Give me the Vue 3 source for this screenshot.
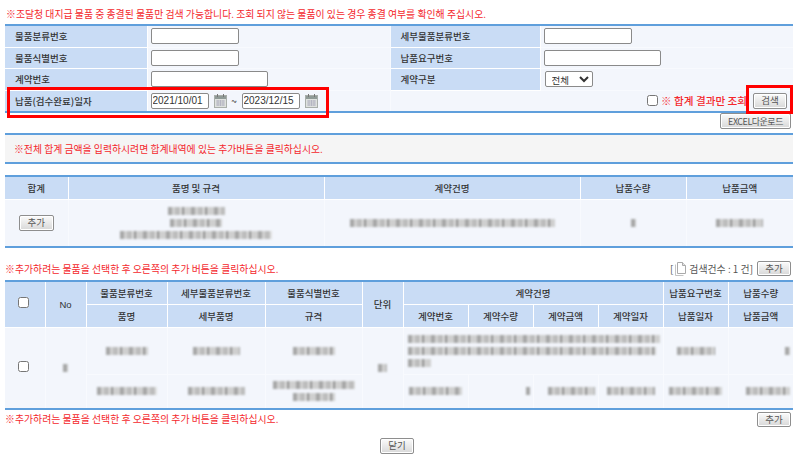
<script setup>
const listCols = [40, 41, 81, 98, 97, 41, 65, 65, 65, 65, 65, 65]
const totalCols = [63, 256, 256, 106, 107]
const calendars = ['2021/10/01', '2023/12/15']

const totalCells = [
  { lines: [57, 52, 152] },
  { lines: [205] },
  { lines: [5] },
  { lines: [47] },
]
const listRow1 = [
  { lines: [5], rs: 2 },
  { lines: [42] },
  { lines: [47] },
  { lines: [42] },
  { lines: [9], rs: 2 },
  { lines: [252, 248, 23], cs: 4, cls: 'left' },
  { lines: [38] },
  { lines: [5], cls: 'end' },
]
const listRow2 = [
  { lines: [60] },
  { lines: [57] },
  { lines: [82, 42] },
  { lines: [53] },
  { lines: [4], cls: 'end' },
  { lines: [47], cls: 'end' },
  { lines: [48] },
  { lines: [53] },
  { lines: [44], cls: 'end' },
]
</script>

<template>
  <div class="page">
    <p class="note top">※조달청 대지급 물품 중 종결된 물품만 검색 가능합니다. 조회 되지 않는 물품이 있는 경우 종결 여부를 확인해 주십시오.</p>

    <table class="grid search">
      <colgroup><col class="s1"><col class="s2"><col class="s3"><col></colgroup>
      <tbody>
        <tr>
          <th>물품분류번호</th><td><input class="in w88"></td>
          <th>세부물품분류번호</th><td><input class="in w88"></td>
        </tr>
        <tr>
          <th>물품식별번호</th><td><input class="in w88"></td>
          <th>납품요구번호</th><td><input class="in w117"></td>
        </tr>
        <tr>
          <th>계약번호</th><td><input class="in w117"></td>
          <th>계약구분</th><td><select class="sel"><option>전체</option></select></td>
        </tr>
        <tr>
          <th>납품(검수완료)일자</th>
          <td>
            <div class="dates">
              <template v-for="(d, i) in calendars" :key="d">
                <span v-if="i" class="tilde">~</span>
                <input class="in date" :value="d">
                <svg class="cal" viewBox="0 0 13 14">
                  <rect x="0.5" y="1.500" width="12" height="12" fill="#dfe2df" stroke="#a9aeaa"/>
                  <rect x="1" y="2" width="11" height="3" fill="#8f9a96"/>
                  <path d="M3.500 0v3M9.500 0v3" stroke="#777"/>
                  <path d="M2 7h9M2 9h9M2 11h9M4 6v6M6.500 6v6M9 6v6" stroke="#aab" stroke-width=".7"/>
                </svg>
              </template>
            </div>
          </td>
          <td colspan="2">
            <div class="sumline">
              <input type="checkbox" class="chk">
              <span class="sumtext">※ 합계 결과만 조회</span>
              <button class="btn b-search">검색</button>
            </div>
          </td>
        </tr>
      </tbody>
    </table>

    <div class="excel-row"><button class="btn b-excel">EXCEL다운로드</button></div>

    <div class="notice">※전체 합계 금액을 입력하시려면 합계내역에 있는 추가버튼을 클릭하십시오.</div>

    <table class="grid total">
      <colgroup><col v-for="(w, i) in totalCols" :key="i" :style="{ width: w + 'px' }"></colgroup>
      <thead>
        <tr><th>합계</th><th>품명 및 규격</th><th>계약건명</th><th>납품수량</th><th>납품금액</th></tr>
      </thead>
      <tbody>
        <tr class="total-row">
          <td class="c"><button class="btn b-add">추가</button></td>
          <td v-for="(cell, i) in totalCells" :key="i">
            <div class="blurs">
              <span v-for="(w, j) in cell.lines" :key="j" class="bl" :style="{ width: w + 'px' }"></span>
            </div>
          </td>
        </tr>
      </tbody>
    </table>

    <div class="bar">
      <span class="note">※추가하려는 물품을 선택한 후 오른쪽의 추가 버튼을 클릭하십시오.</span>
      <span class="count">
        [<svg class="doc" viewBox="0 0 14 15"><path d="M3.500 1.500h5l3 3v8h-8z" fill="#fff" stroke="#aaa"/><path d="M8.500 1.500v3h3" fill="#e4e4e4" stroke="#aaa"/><path d="M1.500 3.500v11h8" fill="none" stroke="#c4c4c4"/></svg>검색건수 : 1 건]
        <button class="btn b-add2">추가</button>
      </span>
    </div>

    <table class="grid list">
      <colgroup><col v-for="(w, i) in listCols" :key="i" :style="{ width: w + 'px' }"></colgroup>
      <thead>
        <tr>
          <th rowspan="2"><input type="checkbox" class="chk shift"></th>
          <th rowspan="2" class="no">No</th>
          <th>물품분류번호</th><th>세부물품분류번호</th><th>물품식별번호</th>
          <th rowspan="2">단위</th>
          <th colspan="4">계약건명</th>
          <th>납품요구번호</th><th>납품수량</th>
        </tr>
        <tr>
          <th>품명</th><th>세부품명</th><th>규격</th>
          <th>계약번호</th><th>계약수량</th><th>계약금액</th><th>계약일자</th>
          <th>납품일자</th><th>납품금액</th>
        </tr>
      </thead>
      <tbody>
        <tr class="d1">
          <td rowspan="2" class="c"><input type="checkbox" class="chk shift"></td>
          <td v-for="(cell, i) in listRow1" :key="i" :rowspan="cell.rs" :colspan="cell.cs">
            <div class="blurs" :class="cell.cls">
              <span v-for="(w, j) in cell.lines" :key="j" class="bl" :style="{ width: w + 'px' }"></span>
            </div>
          </td>
        </tr>
        <tr class="d2">
          <td v-for="(cell, i) in listRow2" :key="i">
            <div class="blurs" :class="cell.cls">
              <span v-for="(w, j) in cell.lines" :key="j" class="bl" :style="{ width: w + 'px' }"></span>
            </div>
          </td>
        </tr>
      </tbody>
    </table>

    <div class="bar bottom">
      <span class="note">※추가하려는 물품을 선택한 후 오른쪽의 추가 버튼을 클릭하십시오.</span>
      <button class="btn b-add3">추가</button>
    </div>

    <div class="close-row"><button class="btn b-close">닫기</button></div>

    <div class="mark mark-date"></div>
    <div class="mark mark-btn"></div>
  </div>
</template>

<style>
html, body { margin: 0; background: #fff; }
</style>

<style scoped>
.page {
  position: relative;
  width: 800px;
  height: 461px;
  overflow: hidden;
  padding: 7px 7px 0 5px;
  box-sizing: border-box;
  font-family: "Noto Sans CJK KR", "Liberation Sans", sans-serif;
  font-size: 9.900px;
  color: #333;
  background: #fff;
}
.note { margin: 0; color: #f4282d; font-size: 9.900px; line-height: 14px; white-space: nowrap; }
.note.top { height: 17px; padding-left: 1px; }
.grid {
  width: 788px;
  border-collapse: collapse;
  table-layout: fixed;
  border-top: 2px solid #5f9fdc;
  border-bottom: 2px solid #5f9fdc;
  background: #f3f6fc;
}
.grid th, .grid td { padding: 0; border: 1px solid #f8fafe; }
.grid th { border-color: #fff; }
.grid tr > :first-child { border-left: 0; }
.grid tr > :last-child { border-right: 0; }
.grid tbody > tr:first-child > * { border-top: 0; }
.grid tbody > tr:last-child > * { border-bottom: 0; }
.grid th { background: #c9dcf5; font-weight: 500; color: #333; font-size: 9.500px; }

.s1 { width: 142px; }
.s2 { width: 243px; }
.s3 { width: 150px; }
.search tr { height: 22px; }
.search tr:nth-child(2) { height: 21px; }
.search th { text-align: left; padding-left: 10px; }
.search td { padding-left: 3px; }
.in {
  display: block;
  box-sizing: border-box;
  height: 16px;
  margin: 0;
  padding: 0 1px;
  border: 1px solid #8a8a8a;
  border-radius: 2px;
  background: #fff;
}
.w88 { width: 88px; }
.w117 { width: 117px; }
.sel {
  display: block;
  width: 48px;
  height: 16px;
  margin-left: 1px;
  padding: 0 0 0 2px;
  border: 1px solid #8a8a8a;
  border-radius: 2px;
  background: #fff;
  font-family: inherit;
  font-size: 9.500px;
  color: #333;
}
.dates { display: flex; align-items: center; }
.date {
  width: 58px;
  font-family: "Liberation Sans", sans-serif;
  font-size: 10px;
  color: #333;
}
.cal { width: 13px; height: 14px; margin-left: 5px; }
.tilde { width: 15px; text-align: center; font-size: 10px; }
.sumline { display: flex; align-items: center; justify-content: flex-end; padding-right: 6px; }
.chk { width: 11px; height: 11px; margin: 0; accent-color: #777; }
.chk.shift { margin-right: 3px; }
.sumtext { margin: 0 6px 0 3px; color: #f4282d; font-size: 10.600px; font-weight: 500; white-space: nowrap; }

.btn {
  box-sizing: border-box;
  display: block;
  padding: 0;
  border: 1px solid #8e8e8e;
  border-radius: 2px;
  background: linear-gradient(#fbfbfb, #d8d8d8);
  font-family: inherit;
  font-size: 9.500px;
  color: #555;
  line-height: 1;
  box-shadow: inset 0 0 0 1px #fff;
}
.b-search { width: 34px; height: 16px; }
.excel-row { display: flex; justify-content: flex-end; padding-right: 2px; height: 20px; }
.b-excel { width: 71px; height: 16px; letter-spacing: -.5px; font-size: 9px; }
.notice {
  box-sizing: border-box;
  width: 788px;
  height: 31px;
  padding: 1px 0 0 9px;
  line-height: 27px;
  border-top: 2px solid #5f9fdc;
  border-bottom: 2px solid #5f9fdc;
  background: #f5f5f5;
  color: #f4282d;
  font-size: 9.850px;
}
.total { margin-top: 11px; }
.total th { text-align: center; height: 22px; }
.total-row { height: 47px; }
.c { text-align: center; }
.b-add { width: 35px; height: 16px; margin: 0 auto; }
.blurs { display: flex; flex-direction: column; align-items: center; gap: 4px; filter: blur(1.200px); }
.blurs.left { align-items: flex-start; padding-left: 4px; }
.blurs.end { align-items: flex-end; padding-right: 3px; }
.bl {
  display: block;
  height: 8px;
  background: repeating-linear-gradient(90deg, #a6a6a6 0 4px, #d2d2d2 4px 7px, #bcbcbc 7px 12px, #e2e2e2 12px 14px, #8e8e8e 14px 16px, #cfcfcf 16px 23px);
}

.bar { display: flex; justify-content: space-between; align-items: center; height: 32px; box-sizing: border-box; }
.count { display: flex; align-items: center; padding-right: 2px; font-size: 9.900px; color: #555; white-space: nowrap; padding-top: 10px; }
.bar > .note { padding-top: 10px; }
.doc { width: 14px; height: 15px; margin: 0 1px; }
.b-add2 { width: 34px; height: 15px; margin-left: 4px; }

.list th { text-align: center; height: 22px; }
.no { font-family: "Liberation Sans", sans-serif; font-size: 11px; }
.d1 { height: 47px; }
.d2 { height: 35px; }

.bottom { height: 20px; align-items: flex-start; padding: 2px 2px 0 0; }
.bottom > .note { padding-top: 0; }
.b-add3 { width: 34px; height: 15px; }
.close-row { display: flex; justify-content: center; padding-top: 8px; padding-right: 4px; }
.b-close { width: 34px; height: 16px; }

.mark { position: absolute; border: 3px solid #f00; box-sizing: border-box; }
.mark-date { left: 7px; top: 87px; width: 322px; height: 31px; }
.mark-btn { left: 746px; top: 85px; width: 47px; height: 29px; }
</style>
